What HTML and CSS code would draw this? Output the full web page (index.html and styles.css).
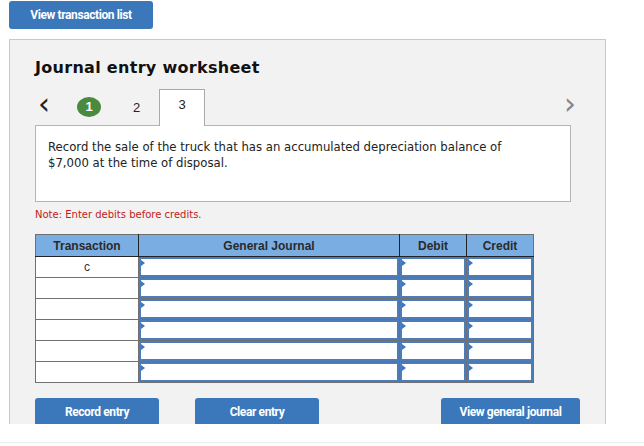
FILE: index.html
```html
<!DOCTYPE html>
<html lang="en">
<head>
    <meta charset="UTF-8">
    <meta name="viewport" content="width=device-width, initial-scale=1.0">
    <title>Journal entry worksheet</title>
    <link rel="stylesheet" href="styles.css">
</head>
<body>
    <button class="btn btn-top">View transaction list</button>

    <div class="panel">
        <h2 class="title">Journal entry worksheet</h2>

        <div class="tabs">
            <span class="arrow arrow-left">&lsaquo;</span>
            <span class="step done">1</span>
            <span class="step">2</span>
            <span class="step current">3</span>
            <span class="arrow arrow-right">&rsaquo;</span>
        </div>

        <div class="question">
            Record the sale of the truck that has an accumulated depreciation balance of
            $7,000 at the time of disposal.
        </div>

        <p class="note">Note: Enter debits before credits.</p>

        <table class="journal">
            <thead>
                <tr>
                    <th class="col-trans">Transaction</th>
                    <th class="col-gj">General Journal</th>
                    <th class="col-amt">Debit</th>
                    <th class="col-amt">Credit</th>
                </tr>
            </thead>
            <tbody>
                <tr>
                    <td class="trans">c</td>
                    <td class="entry"><div class="box"></div></td>
                    <td class="entry"><div class="box"></div></td>
                    <td class="entry"><div class="box"></div></td>
                </tr>
                <tr>
                    <td class="trans"></td>
                    <td class="entry"><div class="box"></div></td>
                    <td class="entry"><div class="box"></div></td>
                    <td class="entry"><div class="box"></div></td>
                </tr>
                <tr>
                    <td class="trans"></td>
                    <td class="entry"><div class="box"></div></td>
                    <td class="entry"><div class="box"></div></td>
                    <td class="entry"><div class="box"></div></td>
                </tr>
                <tr>
                    <td class="trans"></td>
                    <td class="entry"><div class="box"></div></td>
                    <td class="entry"><div class="box"></div></td>
                    <td class="entry"><div class="box"></div></td>
                </tr>
                <tr>
                    <td class="trans"></td>
                    <td class="entry"><div class="box"></div></td>
                    <td class="entry"><div class="box"></div></td>
                    <td class="entry"><div class="box"></div></td>
                </tr>
                <tr>
                    <td class="trans"></td>
                    <td class="entry"><div class="box"></div></td>
                    <td class="entry"><div class="box"></div></td>
                    <td class="entry"><div class="box"></div></td>
                </tr>
            </tbody>
        </table>

        <div class="actions">
            <button class="btn">Record entry</button>
            <button class="btn btn-clear">Clear entry</button>
            <button class="btn btn-view">View general journal</button>
        </div>
    </div>

    <div class="footer-line"></div>
</body>
</html>
```

FILE: styles.css
```css
body {
    margin: 0;
    padding: 1px 0 0 9px;
    background: #fff;
    font-family: "DejaVu Sans", Verdana, sans-serif;
    color: #222;
}
.btn {
    display: block;
    width: 124px;
    height: 28px;
    padding: 0;
    border: none;
    border-radius: 3px;
    background-color: #3a77bb;
    color: #fff;
    font-family: Roboto, "Liberation Sans", sans-serif;
    font-weight: bold;
    font-size: 12px;
    letter-spacing: -0.4px;
    cursor: pointer;
}
.btn-top {
    width: 144px;
}
.panel {
    margin-top: 10px;
    width: 597px;
    height: 385px;
    overflow: hidden;
    box-sizing: border-box;
    border: 1px solid #c8c8c8;
    border-bottom: none;
    background: #f2f2f2;
    padding: 0 0 0 25px;
}
.title {
    margin: 18px 0 0 0;
    font-size: 16px;
    font-weight: bold;
    letter-spacing: 0.3px;
    color: #111;
}
.tabs {
    display: flex;
    align-items: center;
    height: 36px;
    margin-top: 12px;
    width: 536px;
}
.arrow {
    font-size: 30px;
    line-height: 30px;
    margin-top: -6px;
}
.arrow-left {
    margin-left: 3px;
    color: #222;
}
.arrow-right {
    margin-left: auto;
    margin-right: -5px;
    color: #888;
}
.step {
    font-family: "Liberation Sans", Arial, sans-serif;
    font-size: 13px;
    text-align: center;
}
.step.done {
    width: 24px;
    height: 20px;
    line-height: 20px;
    border-radius: 50%;
    background: #4a8a3e;
    color: #fff;
    font-weight: bold;
    margin-left: 27px;
}
.step:nth-child(3) {
    margin-left: 32px;
}
.step.current {
    align-self: flex-end;
    width: 44px;
    height: 36px;
    line-height: 30px;
    margin-left: 19px;
    margin-bottom: -1px;
    background: #fff;
    border: 1px solid #aaa;
    border-bottom: none;
    position: relative;
    z-index: 1;
}
.question {
    width: 536px;
    height: 77px;
    box-sizing: border-box;
    border: 1px solid #b5b5b5;
    background: #fff;
    padding: 13px 60px 13px 12px;
    font-size: 11.7px;
    line-height: 16px;
    color: #222;
}
.note {
    margin: 7px 0 0 0;
    font-size: 10px;
    color: #c41a1a;
}
.journal {
    margin-top: 14px;
    border-collapse: collapse;
    font-family: "Liberation Sans", Arial, sans-serif;
    font-size: 12px;
    border: 1px solid #707070;
}
.journal th {
    height: 21px;
    padding: 0;
    background: #7aaee3;
    color: #2a2a2a;
    font-weight: bold;
    border: 1px solid #707070;
    border-bottom: 1px solid #222;
    border-right: 1px solid #222;
}
.journal th:last-child {
    border-right: 1px solid #707070;
}
.col-trans { width: 102px; }
.col-gj { width: 260px; }
.col-amt { width: 66px; }
.journal td {
    height: 20px;
    padding: 0;
    border: 1px solid #707070;
    background: #fff;
}
.trans {
    text-align: center;
    color: #333;
}
.box {
    height: 16px;
    border: 2px solid #4d7cba;
    background: #fff;
    position: relative;
}
.box::before {
    content: "";
    position: absolute;
    left: 0;
    top: 1px;
    border-top: 3px solid transparent;
    border-bottom: 3px solid transparent;
    border-left: 4px solid #3a77c9;
}
.actions {
    display: flex;
    margin-top: 15px;
}
.btn-clear {
    margin-left: 36px;
}
.btn-view {
    width: 139px;
    margin-left: 122px;
}
.footer-line {
    margin: 18px 0 0 -9px;
    height: 1px;
    background: #ececec;
}
```
